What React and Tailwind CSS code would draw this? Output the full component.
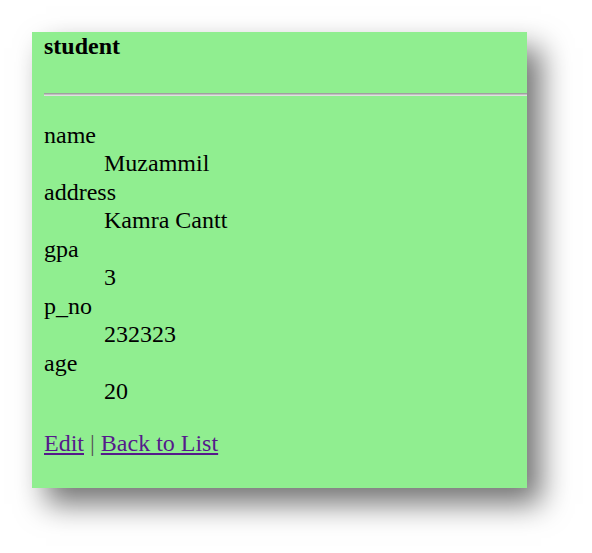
import React from 'react';

const student = [
  { label: 'name', value: 'Muzammil' },
  { label: 'address', value: 'Kamra Cantt' },
  { label: 'gpa', value: '3' },
  { label: 'p_no', value: '232323' },
  { label: 'age', value: '20' },
];

const App = () => {
  return (
    <div className="w-[592px] h-[553px] bg-white pt-[32px] pl-[32px] overflow-hidden">
      <div className="w-[495px] h-[456px] bg-[#90ee90] pl-[12px] font-['Liberation_Serif','Times_New_Roman',serif] text-[24px] leading-[28.5px] text-black shadow-[14px_16px_28px_rgba(0,0,0,0.55)] overflow-hidden">
        <h4 className="font-bold">student</h4>
        <hr className="mt-[32px] border-0 border-t-[1px] border-b-[1px] border-t-[#a0a0a0] border-b-[#e0e0e0] h-[3px] bg-[#c0c0c0] mr-[-20px]" />
        <dl className="mt-[25px]">
          {student.map((row) => (
            <React.Fragment key={row.label}>
              <dt>{row.label}</dt>
              <dd className="ml-[60px]">{row.value}</dd>
            </React.Fragment>
          ))}
        </dl>
        <p className="mt-[23px]">
          <a href="#" className="underline text-[#551a8b]">Edit</a>
          <span className="text-[#555]"> | </span>
          <a href="#" className="underline text-[#551a8b]">Back to List</a>
        </p>
      </div>
    </div>
  );
};

export default App;
